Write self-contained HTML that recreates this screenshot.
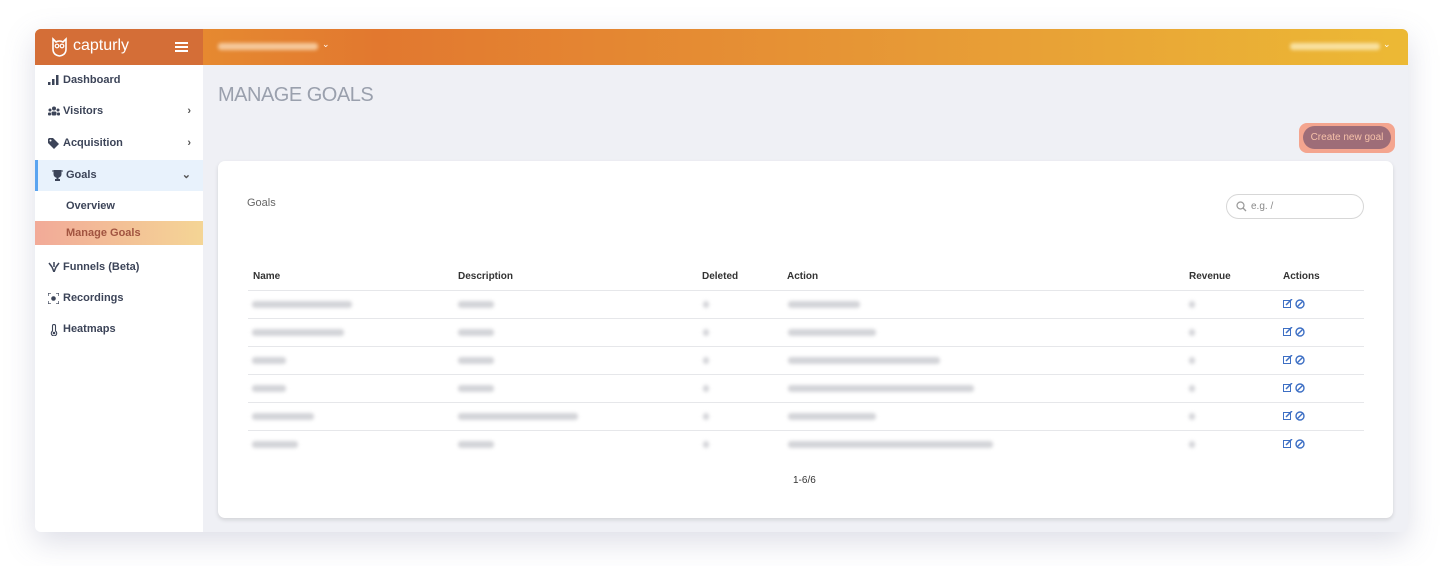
<!DOCTYPE html>
<html><head><style>
*{box-sizing:border-box;margin:0;padding:0}
body{width:1441px;height:566px;background:#fff;font-family:"Liberation Sans",sans-serif;position:relative;overflow:hidden}
.win{position:absolute;left:35px;top:29px;width:1373px;height:503px;background:#eff0f5;border-radius:6px;overflow:hidden;box-shadow:0 10px 30px rgba(120,125,160,.25)}
.hdr{position:absolute;left:0;top:0;width:1373px;height:36px;background:linear-gradient(90deg,#e99a32 0%,#e2782f 25%,#e79a36 65%,#ecb935 100%)}
.brand{position:absolute;left:0;top:0;width:168px;height:36px;background:#d46e37;color:#fff}
.side{position:absolute;left:0;top:36px;width:168px;height:467px;background:#fff}
.nav{position:absolute;left:0;width:168px;height:31px;font-size:11px;font-weight:bold;color:#3c4458;line-height:31px}
.nav svg{position:absolute;left:13px;top:10px}
.nav .t{position:absolute;left:28px}
.nav .ch{position:absolute;right:12px;font-size:11px;color:#555}
.blur{display:inline-block;height:7px;background:#d3d4d8;filter:blur(1.8px);border-radius:3px;vertical-align:middle}
.card{position:absolute;left:183px;top:132px;width:1175px;height:357px;background:#fff;border-radius:7px;box-shadow:0 2px 4px rgba(0,0,0,.12)}
.th{position:absolute;top:110px;font-size:10px;font-weight:bold;color:#333}
.row{position:absolute;left:30px;width:1116px;height:28px;border-top:1px solid #e6e7ea}
.row .blur{position:absolute;top:10px}
.act{position:absolute;left:1035px;top:8px}
</style></head><body>
<div class="win">
 <div class="hdr">
  <div class="brand">
   <svg style="position:absolute;left:16px;top:8px" width="17" height="20" viewBox="0 0 17 20"><path d="M2 2 L5 5 Q8.5 3 12 5 L15 2 L15 12 Q15 18 8.5 19 Q2 18 2 12 Z" fill="none" stroke="#fff" stroke-width="1.6"/><circle cx="6" cy="9" r="1.8" fill="none" stroke="#fff" stroke-width="1.2"/><circle cx="11" cy="9" r="1.8" fill="none" stroke="#fff" stroke-width="1.2"/></svg>
   <span style="position:absolute;left:38px;top:8px;font-size:16px">capturly</span>
   <div style="position:absolute;left:140px;top:13px;width:13px;height:10px;border-top:2px solid #fff;border-bottom:2px solid #fff"><div style="margin-top:2px;height:2px;background:#fff"></div></div>
  </div>
  <span class="blur" style="position:absolute;left:183px;top:14px;width:100px;background:#f5c89a"></span>
  <span style="position:absolute;left:287px;top:10px;color:#fff;font-size:9px">⌄</span>
  <span class="blur" style="position:absolute;left:1255px;top:14px;width:90px;background:#f8e1a0"></span>
  <span style="position:absolute;left:1348px;top:10px;color:#fff;font-size:9px">⌄</span>
 </div>
 <div class="side">
  <div class="nav" style="top:0"><svg width="11" height="10"><rect x="0" y="7" width="2.5" height="3" fill="#3c4458"/><rect x="4" y="4" width="2.5" height="6" fill="#3c4458"/><rect x="8" y="0" width="2.5" height="10" fill="#3c4458"/></svg><span class="t">Dashboard</span></div>
  <div class="nav" style="top:31px"><svg width="12" height="10"><circle cx="6" cy="2.5" r="2" fill="#3c4458"/><circle cx="2" cy="4" r="1.5" fill="#3c4458"/><circle cx="10" cy="4" r="1.5" fill="#3c4458"/><rect x="3.5" y="5.5" width="5" height="4" rx="1.5" fill="#3c4458"/><rect x="0" y="6.5" width="3" height="3" rx="1" fill="#3c4458"/><rect x="9" y="6.5" width="3" height="3" rx="1" fill="#3c4458"/></svg><span class="t">Visitors</span><span class="ch">›</span></div>
  <div class="nav" style="top:63px"><svg width="11" height="11"><path d="M0 1 L0 5 L6 11 L11 6 L5 0 L1 0 Z" fill="#3c4458"/><circle cx="2.5" cy="2.5" r="1" fill="#fff"/></svg><span class="t">Acquisition</span><span class="ch">›</span></div>
  <div class="nav" style="top:95px;background:#e8f2fc;border-left:3px solid #5ba4f0"><svg width="11" height="11" style="left:14px"><path d="M2 0 H9 V4 Q9 7 5.5 7.5 Q2 7 2 4 Z M0 1 H2 M9 1 H11" fill="#3c4458" stroke="#3c4458"/><rect x="4.5" y="7" width="2" height="2" fill="#3c4458"/><rect x="3" y="9" width="5" height="2" fill="#3c4458"/></svg><span class="t" style="left:28px">Goals</span><span class="ch">⌄</span></div>
  <div class="nav" style="top:128px;height:26px;line-height:26px"><span class="t" style="left:31px">Overview</span></div>
  <div class="nav" style="top:156px;height:24px;line-height:24px;background:linear-gradient(90deg,#f2aa98,#f4d595);color:#a15440"><span class="t" style="left:31px">Manage Goals</span></div>
  <div class="nav" style="top:187px"><svg width="12" height="10"><path d="M1 1 L4 5 M11 1 L8 5 M6 0 V5 M4 5 L6 10 L8 5" stroke="#3c4458" stroke-width="1.5" fill="none"/></svg><span class="t">Funnels (Beta)</span></div>
  <div class="nav" style="top:218px"><svg width="11" height="11"><path d="M0 3V0H3M8 0H11V3M11 8V11H8M3 11H0V8" stroke="#3c4458" stroke-width="1.3" fill="none"/><circle cx="5.5" cy="5.5" r="2.3" fill="#3c4458"/></svg><span class="t">Recordings</span></div>
  <div class="nav" style="top:249px"><svg width="8" height="12" style="left:15px"><path d="M2.5 7V2a1.5 1.5 0 0 1 3 0v5a2.7 2.7 0 1 1-3 0z" stroke="#3c4458" stroke-width="1.1" fill="none"/><circle cx="4" cy="9" r="1.3" fill="#3c4458"/></svg><span class="t">Heatmaps</span></div>
 </div>
 <div style="position:absolute;left:183px;top:55px;font-size:20px;color:#9aa0ad;letter-spacing:-.5px">MANAGE GOALS</div>
 <div style="position:absolute;left:1264px;top:94px;width:96px;height:30px;border-radius:8px;background:#f4a58f"></div>
 <div style="position:absolute;left:1268px;top:97px;width:88px;height:23px;border-radius:12px;background:#9e6d78;color:#f6c1a9;font-size:10px;line-height:23px;text-align:center">Create new goal</div>
 <div class="card">
  <div style="position:absolute;left:29px;top:36px;font-size:11px;color:#666">Goals</div>
  <div style="position:absolute;left:1008px;top:33px;width:138px;height:25px;border:1px solid #d7d7d7;border-radius:13px;font-size:10px;color:#888;line-height:23px;padding-left:24px">e.g. /
   <svg style="position:absolute;left:9px;top:6px" width="11" height="11" viewBox="0 0 11 11"><circle cx="4.5" cy="4.5" r="3.5" fill="none" stroke="#999" stroke-width="1.2"/><path d="M7 7l3 3" stroke="#999" stroke-width="1.3"/></svg></div>
  <div class="th" style="left:35px">Name</div>
  <div class="th" style="left:240px">Description</div>
  <div class="th" style="left:484px">Deleted</div>
  <div class="th" style="left:569px">Action</div>
  <div class="th" style="left:971px">Revenue</div>
  <div class="th" style="left:1065px">Actions</div>
  <div class="row" style="top:129px"><span class="blur" style="left:4px;width:100px"></span><span class="blur" style="left:210px;width:36px"></span><span class="blur" style="left:455px;width:6px"></span><span class="blur" style="left:540px;width:72px"></span><span class="blur" style="left:941px;width:6px"></span><svg class="act" width="22" height="10"><rect x="0.5" y="1.5" width="7" height="7" fill="none" stroke="#3d6fc4"/><path d="M3 6 L9 0" stroke="#3d6fc4" stroke-width="1.5"/><circle cx="17" cy="5" r="4" fill="none" stroke="#3d6fc4" stroke-width="1.4"/><path d="M14.5 7.5 L19.5 2.5" stroke="#3d6fc4" stroke-width="1.4"/></svg></div>
  <div class="row" style="top:157px"><span class="blur" style="left:4px;width:92px"></span><span class="blur" style="left:210px;width:36px"></span><span class="blur" style="left:455px;width:6px"></span><span class="blur" style="left:540px;width:88px"></span><span class="blur" style="left:941px;width:6px"></span><svg class="act" width="22" height="10"><rect x="0.5" y="1.5" width="7" height="7" fill="none" stroke="#3d6fc4"/><path d="M3 6 L9 0" stroke="#3d6fc4" stroke-width="1.5"/><circle cx="17" cy="5" r="4" fill="none" stroke="#3d6fc4" stroke-width="1.4"/><path d="M14.5 7.5 L19.5 2.5" stroke="#3d6fc4" stroke-width="1.4"/></svg></div>
  <div class="row" style="top:185px"><span class="blur" style="left:4px;width:34px"></span><span class="blur" style="left:210px;width:36px"></span><span class="blur" style="left:455px;width:6px"></span><span class="blur" style="left:540px;width:152px"></span><span class="blur" style="left:941px;width:6px"></span><svg class="act" width="22" height="10"><rect x="0.5" y="1.5" width="7" height="7" fill="none" stroke="#3d6fc4"/><path d="M3 6 L9 0" stroke="#3d6fc4" stroke-width="1.5"/><circle cx="17" cy="5" r="4" fill="none" stroke="#3d6fc4" stroke-width="1.4"/><path d="M14.5 7.5 L19.5 2.5" stroke="#3d6fc4" stroke-width="1.4"/></svg></div>
  <div class="row" style="top:213px"><span class="blur" style="left:4px;width:34px"></span><span class="blur" style="left:210px;width:36px"></span><span class="blur" style="left:455px;width:6px"></span><span class="blur" style="left:540px;width:186px"></span><span class="blur" style="left:941px;width:6px"></span><svg class="act" width="22" height="10"><rect x="0.5" y="1.5" width="7" height="7" fill="none" stroke="#3d6fc4"/><path d="M3 6 L9 0" stroke="#3d6fc4" stroke-width="1.5"/><circle cx="17" cy="5" r="4" fill="none" stroke="#3d6fc4" stroke-width="1.4"/><path d="M14.5 7.5 L19.5 2.5" stroke="#3d6fc4" stroke-width="1.4"/></svg></div>
  <div class="row" style="top:241px"><span class="blur" style="left:4px;width:62px"></span><span class="blur" style="left:210px;width:120px"></span><span class="blur" style="left:455px;width:6px"></span><span class="blur" style="left:540px;width:88px"></span><span class="blur" style="left:941px;width:6px"></span><svg class="act" width="22" height="10"><rect x="0.5" y="1.5" width="7" height="7" fill="none" stroke="#3d6fc4"/><path d="M3 6 L9 0" stroke="#3d6fc4" stroke-width="1.5"/><circle cx="17" cy="5" r="4" fill="none" stroke="#3d6fc4" stroke-width="1.4"/><path d="M14.5 7.5 L19.5 2.5" stroke="#3d6fc4" stroke-width="1.4"/></svg></div>
  <div class="row" style="top:269px"><span class="blur" style="left:4px;width:46px"></span><span class="blur" style="left:210px;width:36px"></span><span class="blur" style="left:455px;width:6px"></span><span class="blur" style="left:540px;width:205px"></span><span class="blur" style="left:941px;width:6px"></span><svg class="act" width="22" height="10"><rect x="0.5" y="1.5" width="7" height="7" fill="none" stroke="#3d6fc4"/><path d="M3 6 L9 0" stroke="#3d6fc4" stroke-width="1.5"/><circle cx="17" cy="5" r="4" fill="none" stroke="#3d6fc4" stroke-width="1.4"/><path d="M14.5 7.5 L19.5 2.5" stroke="#3d6fc4" stroke-width="1.4"/></svg></div>
  <div style="position:absolute;left:575px;top:343px;font-size:10px;color:#333"></div>
  <div style="position:absolute;left:575px;top:314px;font-size:10px;color:#333">1-6/6</div>
 </div>
</div>
</body></html>
